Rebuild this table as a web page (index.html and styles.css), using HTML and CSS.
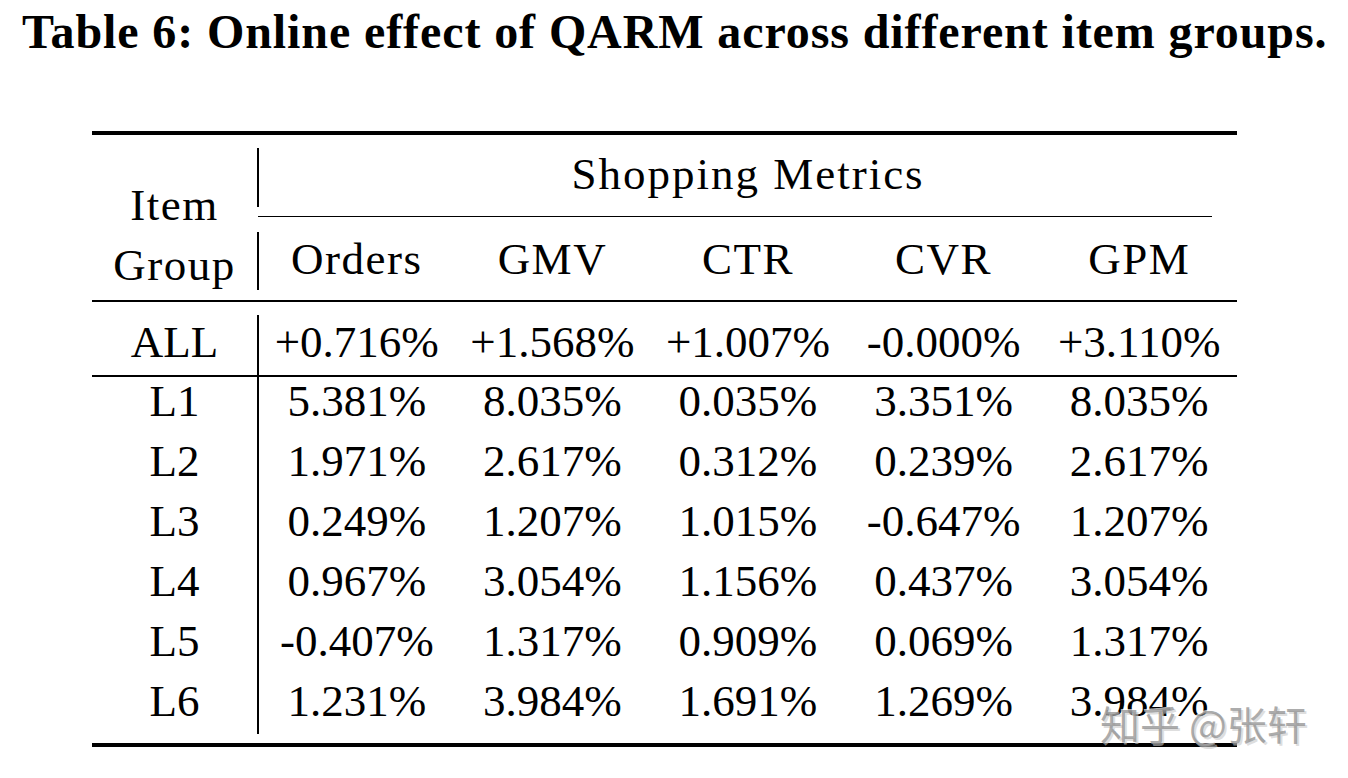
FILE: index.html
```html
<!DOCTYPE html>
<html lang="en">
<head>
<meta charset="utf-8">
<title>Table 6</title>
<link rel="stylesheet" href="styles.css">
</head>
<body>
<div class="page">
  <h1 class="caption">Table 6: Online effect of QARM across different item groups.</h1>
  <div class="table">
    <div class="rule-thick"></div>
    <div class="head">
      <div class="head-label"><span>Item</span><span>Group</span></div>
      <div class="head-right">
        <div class="seg-top">Shopping Metrics</div>
        <div class="cmid"></div>
        <div class="cells seg-cols"><span>Orders</span><span>GMV</span><span>CTR</span><span>CVR</span><span>GPM</span></div>
      </div>
    </div>
    <div class="rule-mid"></div>
    <div class="row row-all">
      <div class="label">ALL</div>
      <div class="cells"><span>+0.716%</span><span>+1.568%</span><span>+1.007%</span><span>-0.000%</span><span>+3.110%</span></div>
    </div>
    <div class="rule-mid"></div>
    <div class="groups">
      <div class="row">
        <div class="label">L1</div>
        <div class="cells"><span>5.381%</span><span>8.035%</span><span>0.035%</span><span>3.351%</span><span>8.035%</span></div>
      </div>
      <div class="row">
        <div class="label">L2</div>
        <div class="cells"><span>1.971%</span><span>2.617%</span><span>0.312%</span><span>0.239%</span><span>2.617%</span></div>
      </div>
      <div class="row">
        <div class="label">L3</div>
        <div class="cells"><span>0.249%</span><span>1.207%</span><span>1.015%</span><span>-0.647%</span><span>1.207%</span></div>
      </div>
      <div class="row">
        <div class="label">L4</div>
        <div class="cells"><span>0.967%</span><span>3.054%</span><span>1.156%</span><span>0.437%</span><span>3.054%</span></div>
      </div>
      <div class="row">
        <div class="label">L5</div>
        <div class="cells"><span>-0.407%</span><span>1.317%</span><span>0.909%</span><span>0.069%</span><span>1.317%</span></div>
      </div>
      <div class="row row-last">
        <div class="label">L6</div>
        <div class="cells"><span>1.231%</span><span>3.984%</span><span>1.691%</span><span>1.269%</span><span>3.984%</span></div>
      </div>
    </div>
    <div class="rule-thick"></div>
  </div>
  <div class="watermark">知乎 @张轩</div>
</div>
</body>
</html>
```

FILE: styles.css
```css
html, body {
  margin: 0;
  padding: 0;
  background: #ffffff;
}

body {
  font-family: "Liberation Serif", "Times New Roman", serif;
  color: #000000;
}

.page {
  position: relative;
  width: 1348px;
  height: 778px;
  overflow: hidden;
}

.caption {
  margin: 0;
  padding: 2px 0 0 22px;
  font-size: 48px;
  font-weight: bold;
  line-height: 60px;
  letter-spacing: 0.9px;
  white-space: nowrap;
}

.table {
  margin: 69px 0 0 92px;
  width: 1145px;
  font-size: 45px;
}

.rule-thick {
  height: 4px;
  background: #000;
}

.rule-mid {
  height: 2px;
  background: #000;
}

.head {
  display: flex;
  height: 165px;
  letter-spacing: 1.5px;
}

.head-label {
  width: 165px;
  flex: none;
  display: flex;
  flex-direction: column;
  align-items: center;
  padding-top: 40px;
  line-height: 60px;
}

.head-right {
  flex: 1;
  display: flex;
  flex-direction: column;
}

.seg-top {
  margin: 13px 0 9px 0;
  border-left: 2px solid #000;
  line-height: 53px;
  padding-bottom: 6px;
  text-align: center;
  letter-spacing: 2px;
}

.cmid {
  height: 1px;
  background: #000;
  margin: 0 25px 0 1px;
}

.seg-cols {
  margin: 15px 0 10px 0;
  line-height: 54px;
  padding-bottom: 4px;
}

.cells {
  flex: 1;
  display: flex;
  border-left: 2px solid #000;
}

.cells span {
  flex: 1;
  text-align: center;
  white-space: nowrap;
}

.row {
  display: flex;
}

.label {
  width: 165px;
  flex: none;
  text-align: center;
}

.row-all {
  padding-top: 13px;
  line-height: 54px;
}

.row-all .label {
  padding-bottom: 6px;
}

.row-all .cells {
  padding-bottom: 6px;
}

.groups .row {
  line-height: 48px;
}

.groups .row .cells {
  padding-bottom: 12px;
}

.groups .row-last .cells {
  padding-bottom: 9px;
}

.groups {
  padding-bottom: 9px;
}

.watermark {
  position: absolute;
  left: 1100px;
  top: 695px;
  font-family: "Noto Sans CJK SC", "Noto Sans", sans-serif;
  font-size: 40px;
  line-height: 56px;
  color: rgba(140, 140, 140, 0.72);
  text-shadow: 2px 2px 0 rgba(200, 200, 200, 0.6), -1px -1px 0 rgba(255, 255, 255, 0.7);
  white-space: nowrap;
}
```
